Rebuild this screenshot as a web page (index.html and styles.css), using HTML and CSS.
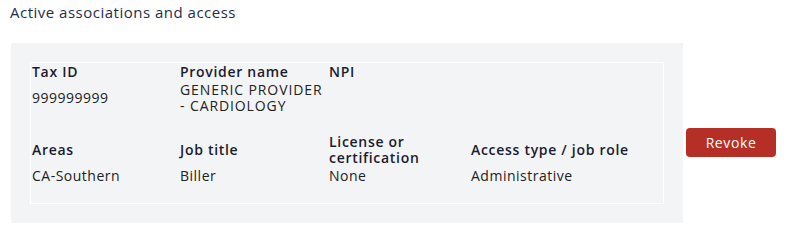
FILE: index.html
```html
<!DOCTYPE html>
<html lang="en">
<head>
    <meta charset="UTF-8">
    <meta name="viewport" content="width=device-width, initial-scale=1.0">
    <title>Active associations and access</title>
    <link rel="stylesheet" href="styles.css">
</head>
<body>
    <div class="page">
        <h2 class="section-title">Active associations and access</h2>

        <div class="association-row">
            <div class="association-card">
                <div class="association-grid">
                    <div class="label">Tax ID</div>
                    <div class="label">Provider name</div>
                    <div class="label">NPI</div>
                    <div class="label"></div>

                    <div class="value">999999999</div>
                    <div class="value provider">GENERIC PROVIDER - CARDIOLOGY</div>
                    <div class="value"></div>
                    <div class="value"></div>

                    <div class="label second">Areas</div>
                    <div class="label second">Job title</div>
                    <div class="label second">License or certification</div>
                    <div class="label second">Access type / job role</div>

                    <div class="value">CA-Southern</div>
                    <div class="value">Biller</div>
                    <div class="value">None</div>
                    <div class="value">Administrative</div>
                </div>
            </div>

            <button type="button" class="revoke-btn">Revoke</button>
        </div>
    </div>
</body>
</html>
```

FILE: styles.css
```css
* {
    margin: 0;
    padding: 0;
    box-sizing: border-box;
    font-family: "Open Sans", "Liberation Sans", sans-serif;
}

body {
    background-color: white;
}

.page {
    padding: 2px 0 0 10px;
}

.section-title {
    font-size: 15px;
    font-weight: 400;
    line-height: 20px;
    letter-spacing: 0.5px;
    color: #1f2d4a;
    margin-bottom: 21px;
}

.association-row {
    display: flex;
    align-items: flex-start;
}

.association-card {
    width: 672px;
    margin-left: 1px;
    background-color: #f3f4f6;
    padding: 19px;
}

.association-grid {
    display: grid;
    grid-template-columns: 148px 149px 142px 1fr;
    align-items: center;
    border: 1px solid white;
    padding: 1px 0 19px 1px;
}

.label {
    font-size: 14px;
    font-weight: 600;
    line-height: 16px;
    letter-spacing: 0.7px;
    color: #1b1c2e;
    padding-right: 4px;
}

.label.second {
    margin-top: 20px;
}

.value {
    font-size: 14px;
    line-height: 16px;
    letter-spacing: 0.5px;
    color: #222;
    margin-top: 2px;
    padding-right: 4px;
}

.value.provider {
    letter-spacing: 0.9px;
    padding-right: 0;
}

.revoke-btn {
    margin: 85px 0 0 3px;
    width: 90px;
    height: 29px;
    background-color: #b52f26;
    color: white;
    border: none;
    border-radius: 4px;
    font-size: 14px;
    letter-spacing: 0.6px;
    cursor: pointer;
}

.revoke-btn:hover {
    background-color: #9c271f;
}
```
